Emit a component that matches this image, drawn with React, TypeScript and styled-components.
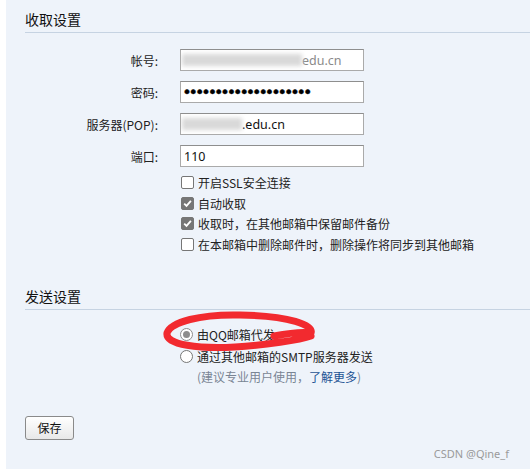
import React from "react";
import styled, { createGlobalStyle } from "styled-components";

const GlobalStyle = createGlobalStyle`
  html, body {
    margin: 0;
    padding: 0;
    background: #ffffff;
  }
  body {
    font-family: "Noto Sans CJK SC", "Noto Sans", sans-serif;
    font-size: 12px;
    color: #222;
  }
`;

const Page = styled.div`
  position: relative;
  width: 530px;
  height: 469px;
  padding-left: 6px;
  box-sizing: border-box;
  background: #ffffff;
  overflow: hidden;
`;

const Panel = styled.div`
  height: 100%;
  background: #eef3fa;
  padding-left: 19px;
  padding-top: 9px;
  box-sizing: border-box;
`;

const SectionTitle = styled.div<{ $top?: number }>`
  font-size: 14px;
  line-height: 20px;
  padding-bottom: 3px;
  margin-top: ${(p) => p.$top ?? 0}px;
  border-bottom: 1px solid #c6d3e2;
  color: #111;
`;

const Form = styled.div`
  display: flex;
  flex-direction: column;
  gap: 10px;
  margin-top: 16px;
`;

const Row = styled.div`
  display: grid;
  grid-template-columns: 133px 184px;
  column-gap: 22px;
  align-items: center;
`;

const Label = styled.div`
  text-align: right;
  font-size: 12px;
  color: #222;
`;

const Field = styled.div<{ $muted?: boolean }>`
  height: 22px;
  box-sizing: border-box;
  border: 1px solid #aaaaaa;
  border-top-color: #8e8e8e;
  background: #ffffff;
  display: flex;
  align-items: center;
  padding-left: 3px;
  font-family: "Noto Sans", "DejaVu Sans", sans-serif;
  font-size: 12.5px;
  color: ${(p) => (p.$muted ? "#8a8a8a" : "#111")};
  overflow: hidden;
  white-space: nowrap;
`;

const Blur = styled.span<{ $w: number }>`
  display: inline-block;
  width: ${(p) => p.$w}px;
  height: 12px;
  background: #d9d9d9;
  filter: blur(2px);
  margin-left: -2px;
`;

const Dots = styled.span`
  font-family: "Liberation Sans", sans-serif;
  font-size: 17px;
  letter-spacing: 0.4px;
  color: #000;
  -webkit-text-stroke: 0.4px #000;
`;

const Options = styled.div`
  display: flex;
  flex-direction: column;
  gap: 3.6px;
  margin-top: 7px;
  padding-left: 156px;
`;

const Option = styled.label`
  display: flex;
  align-items: center;
  gap: 4px;
  height: 17px;
  font-size: 12px;
  color: #222;
`;

const Box = styled.span<{ $on?: boolean }>`
  width: 13px;
  height: 13px;
  box-sizing: border-box;
  border-radius: 2px;
  border: 1px solid #767676;
  background: ${(p) => (p.$on ? "#767676" : "#ffffff")};
  display: flex;
  align-items: center;
  justify-content: center;
  flex-shrink: 0;
`;

const Radio = styled.span<{ $on?: boolean }>`
  width: 13px;
  height: 13px;
  box-sizing: border-box;
  border-radius: 50%;
  border: 1px solid ${(p) => (p.$on ? "#8d8d8d" : "#767676")};
  background: #ffffff;
  display: flex;
  align-items: center;
  justify-content: center;
  flex-shrink: 0;

  &::after {
    content: "";
    display: ${(p) => (p.$on ? "block" : "none")};
    width: 7px;
    height: 7px;
    border-radius: 50%;
    background: #8d8d8d;
  }
`;

const SendGroup = styled.div`
  display: flex;
  flex-direction: column;
  gap: 5px;
  margin-top: 16px;
  padding-left: 155px;
`;

const Hint = styled.div`
  padding-left: 17px;
  color: #7a8594;
  font-size: 12px;
  margin-top: -2px;

  a {
    color: #1e5494;
    text-decoration: none;
  }
`;

const SaveButton = styled.button`
  margin-top: 31px;
  width: 49px;
  height: 24px;
  border: 1px solid #8a8a8a;
  border-radius: 3px;
  background: linear-gradient(#ffffff, #e8e8e8);
  font-family: "Noto Sans CJK SC", sans-serif;
  font-size: 12px;
  color: #111;
  padding: 0;
`;

const Watermark = styled.div`
  position: absolute;
  right: 21px;
  bottom: 8px;
  font-family: "Noto Sans", sans-serif;
  font-size: 11px;
  color: #9a9a9a;
`;

const Scribble = styled.svg`
  position: absolute;
  left: 0;
  top: 0;
  pointer-events: none;
`;

const Check = () => (
  <svg width="9" height="9" viewBox="0 0 9 9">
    <path d="M1.2 4.6 L3.5 6.9 L7.9 1.8" fill="none" stroke="#fff" strokeWidth="1.8" />
  </svg>
);

const checks = [
  { text: "开启SSL安全连接", on: false },
  { text: "自动收取", on: true },
  { text: "收取时，在其他邮箱中保留邮件备份", on: true },
  { text: "在本邮箱中删除邮件时，删除操作将同步到其他邮箱", on: false },
];

export default function App() {
  return (
    <>
      <GlobalStyle />
      <Page>
        <Panel>
          <SectionTitle>收取设置</SectionTitle>
          <Form>
            <Row>
              <Label>帐号:</Label>
              <Field $muted>
                <Blur $w={120} />
                edu.cn
              </Field>
            </Row>
            <Row>
              <Label>密码:</Label>
              <Field>
                <Dots>••••••••••••••••••••</Dots>
              </Field>
            </Row>
            <Row>
              <Label>服务器(POP):</Label>
              <Field>
                <Blur $w={60} />
                .edu.cn
              </Field>
            </Row>
            <Row>
              <Label>端口:</Label>
              <Field>110</Field>
            </Row>
          </Form>

          <Options>
            {checks.map((c) => (
              <Option key={c.text}>
                <Box $on={c.on}>{c.on && <Check />}</Box>
                {c.text}
              </Option>
            ))}
          </Options>

          <SectionTitle $top={33}>发送设置</SectionTitle>
          <SendGroup>
            <Option>
              <Radio $on />
              由QQ邮箱代发
            </Option>
            <Option>
              <Radio />
              通过其他邮箱的SMTP服务器发送
            </Option>
            <Hint>
              (建议专业用户使用，<a href="#">了解更多</a>)
            </Hint>
          </SendGroup>

          <SaveButton>保存</SaveButton>
        </Panel>

        <Scribble width="530" height="469">
          <path
            d="M274 336 C290 333 304 332 311 333 C314 325 290 316 240 315 C200 314 171 322 167 333 C165 345 200 349 235 347 C265 345 300 340 311 336"
            fill="none"
            stroke="#f22a2f"
            strokeWidth="7"
            strokeLinecap="round"
          />
        </Scribble>

        <Watermark>CSDN @Qine_f</Watermark>
      </Page>
    </>
  );
}
